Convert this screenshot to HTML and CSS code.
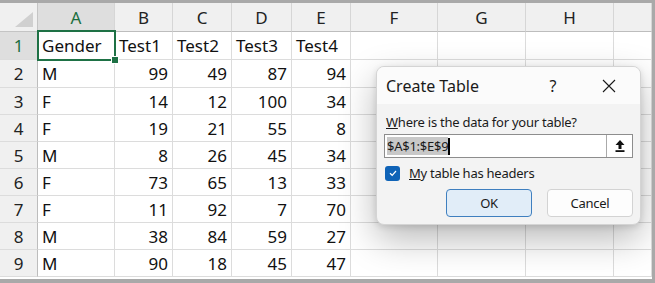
FILE: index.html
```html
<!DOCTYPE html>
<html>
<head>
<meta charset="utf-8">
<link rel="stylesheet" href="styles.css">
</head>
<body>
<div class="sheet">
  <div class="grid">
    <div class="corner"><span class="tri"></span></div>
    <div class="ch sel">A</div>
    <div class="ch">B</div>
    <div class="ch">C</div>
    <div class="ch">D</div>
    <div class="ch">E</div>
    <div class="ch">F</div>
    <div class="ch">G</div>
    <div class="ch">H</div>
    <div class="ch"></div>

    <div class="rh sel">1</div>
    <div class="c t active">Gender</div><div class="c t">Test1</div><div class="c t">Test2</div><div class="c t">Test3</div><div class="c t">Test4</div><div class="c"></div><div class="c"></div><div class="c"></div><div class="c"></div>

    <div class="rh">2</div>
    <div class="c t">M</div><div class="c n">99</div><div class="c n">49</div><div class="c n">87</div><div class="c n">94</div><div class="c"></div><div class="c"></div><div class="c"></div><div class="c"></div>

    <div class="rh">3</div>
    <div class="c t">F</div><div class="c n">14</div><div class="c n">12</div><div class="c n">100</div><div class="c n">34</div><div class="c"></div><div class="c"></div><div class="c"></div><div class="c"></div>

    <div class="rh">4</div>
    <div class="c t">F</div><div class="c n">19</div><div class="c n">21</div><div class="c n">55</div><div class="c n">8</div><div class="c"></div><div class="c"></div><div class="c"></div><div class="c"></div>

    <div class="rh">5</div>
    <div class="c t">M</div><div class="c n">8</div><div class="c n">26</div><div class="c n">45</div><div class="c n">34</div><div class="c"></div><div class="c"></div><div class="c"></div><div class="c"></div>

    <div class="rh">6</div>
    <div class="c t">F</div><div class="c n">73</div><div class="c n">65</div><div class="c n">13</div><div class="c n">33</div><div class="c"></div><div class="c"></div><div class="c"></div><div class="c"></div>

    <div class="rh">7</div>
    <div class="c t">F</div><div class="c n">11</div><div class="c n">92</div><div class="c n">7</div><div class="c n">70</div><div class="c"></div><div class="c"></div><div class="c"></div><div class="c"></div>

    <div class="rh">8</div>
    <div class="c t">M</div><div class="c n">38</div><div class="c n">84</div><div class="c n">59</div><div class="c n">27</div><div class="c"></div><div class="c"></div><div class="c"></div><div class="c"></div>

    <div class="rh">9</div>
    <div class="c t">M</div><div class="c n">90</div><div class="c n">18</div><div class="c n">45</div><div class="c n">47</div><div class="c"></div><div class="c"></div><div class="c"></div><div class="c"></div>
  </div>

  <div class="dialog">
    <div class="titlebar">
      <span class="title">Create Table</span>
      <span class="help">?</span>
      <span class="close">
        <svg width="14" height="14" viewBox="0 0 14 14"><path d="M1 1L13 13M13 1L1 13" stroke="#1a1a1a" stroke-width="1.1" fill="none"/></svg>
      </span>
    </div>
    <div class="dbody">
      <div class="label"><u>W</u>here is the data for your table?</div>
      <div class="input">
        <div class="field"><span class="selected">$A$1:$E$9</span><span class="caret"></span></div>
        <div class="collapse">
          <svg width="12" height="14" viewBox="0 0 12 14"><path d="M6 1L1.5 6H4.5V10H7.5V6H10.5Z" fill="#111"/><rect x="1.5" y="11.2" width="9" height="1.8" fill="#111"/></svg>
        </div>
      </div>
      <div class="check">
        <span class="box"><svg width="10" height="10" viewBox="0 0 10 10"><path d="M2 5.2L4.2 7.3L8 3" stroke="#fff" stroke-width="1.2" fill="none"/></svg></span>
        <span class="clabel"><u>M</u>y table has headers</span>
      </div>
      <div class="buttons">
        <div class="btn ok">OK</div>
        <div class="btn">Cancel</div>
      </div>
    </div>
  </div>
</div>
</body>
</html>
```

FILE: styles.css
```css
* { box-sizing: border-box; }
html, body { margin: 0; padding: 0; background: #fff; }
body { font-family: "Noto Sans", "DejaVu Sans", sans-serif; }

.sheet {
  position: relative;
  width: 655px;
  height: 283px;
  overflow: hidden;
  background: #fff;
  border-top: 3px solid #a9a9a9;
  border-right: 3px solid #a9a9a9;
  border-bottom: 4px solid #a9a9a9;
}

.grid {
  display: grid;
  grid-template-columns: 38px 77px 58px 59px 60px 59px 87px 88px 88px 38px;
  grid-template-rows: 29px 28px 28px 27px 27px 27px 27px 27px 27px 27px;
}

.corner {
  position: relative;
  background: #f0f0f0;
  border-right: 1px solid #c4c4c4;
  border-bottom: 1px solid #c4c4c4;
}
.tri {
  position: absolute;
  right: 4px;
  bottom: 4px;
  width: 0;
  height: 0;
  border-left: 18px solid transparent;
  border-bottom: 15px solid #d0d0d0;
}

.ch {
  background: #f0f0f0;
  border-right: 1px solid #d6d6d6;
  border-bottom: 1px solid #bdbdbd;
  font-size: 17px;
  color: #222;
  display: flex;
  align-items: center;
  justify-content: center;
}
.ch.sel {
  background: #dedede;
  color: #1b6f3f;
}

.rh {
  background: #f0f0f0;
  border-right: 1px solid #bdbdbd;
  border-bottom: 1px solid #dcdcdc;
  font-size: 17px;
  color: #222;
  display: flex;
  align-items: center;
  justify-content: center;
}
.rh.sel {
  background: #dedede;
  color: #1b6f3f;
}

.c {
  border-right: 1px solid #dcdcdc;
  border-bottom: 1px solid #dcdcdc;
  font-size: 17px;
  color: #111;
  display: flex;
  align-items: center;
  white-space: nowrap;
}
.c.t { padding-left: 4px; }
.c.n { justify-content: flex-end; padding-right: 4px; }

.c.active { position: relative; }
.c.active::before {
  content: "";
  position: absolute;
  left: -1px;
  top: -2px;
  right: -2px;
  bottom: -2px;
  border: 2px solid #1e7145;
}
.c.active::after {
  content: "";
  position: absolute;
  right: -5px;
  bottom: -5px;
  width: 6px;
  height: 6px;
  background: #1e7145;
  border: 1px solid #fff;
}

.dialog {
  position: absolute;
  left: 376px;
  top: 63px;
  width: 265px;
  height: 159px;
  border-radius: 8px;
  background: #f3f3f3;
  border: 1px solid #d4d4d4;
  box-shadow: 0 14px 36px rgba(0,0,0,0.28), 0 2px 6px rgba(0,0,0,0.12);
  overflow: hidden;
  font-size: 13px;
  letter-spacing: -0.25px;
  color: #1a1a1a;
}

.titlebar {
  height: 37px;
  background: #fbfbfb;
  display: flex;
  align-items: center;
  padding-left: 9px;
  letter-spacing: 0;
}
.title { font-size: 16px; flex: 1; }
.help { width: 20px; text-align: center; font-size: 16px; margin-right: 39px; }
.close { width: 14px; height: 14px; display: flex; margin-right: 24px; }

.dbody {
  padding: 7px 7px 0 7px;
}
.label { padding-left: 2px; height: 22px; line-height: 22px; }
.input {
  margin-top: 1px;
  height: 24px;
  background: #fff;
  border: 1px solid #8d8d8d;
  display: flex;
}
.field {
  flex: 1;
  display: flex;
  align-items: center;
  padding-left: 2px;
}
.selected { background: #c8c8c8; line-height: 18px; }
.caret { width: 2px; height: 17px; background: #000; }
.collapse {
  width: 26px;
  border-left: 1px solid #aaa;
  display: flex;
  align-items: center;
  justify-content: center;
}

.check {
  display: flex;
  align-items: center;
  height: 30px;
  padding-left: 1px;
}
.box {
  width: 15px;
  height: 15px;
  border-radius: 3px;
  background: #0f63b7;
  display: flex;
  align-items: center;
  justify-content: center;
  margin-right: 9px;
}

.buttons {
  display: flex;
  justify-content: flex-end;
  gap: 15px;
  padding-top: 1px;
}
.btn {
  width: 86px;
  height: 28px;
  border-radius: 4px;
  background: #fdfdfd;
  border: 1px solid #d3d3d3;
  display: flex;
  align-items: center;
  justify-content: center;
}
.btn.ok {
  background: #e1edf8;
  border: 1px solid #3f7fbf;
}
```
